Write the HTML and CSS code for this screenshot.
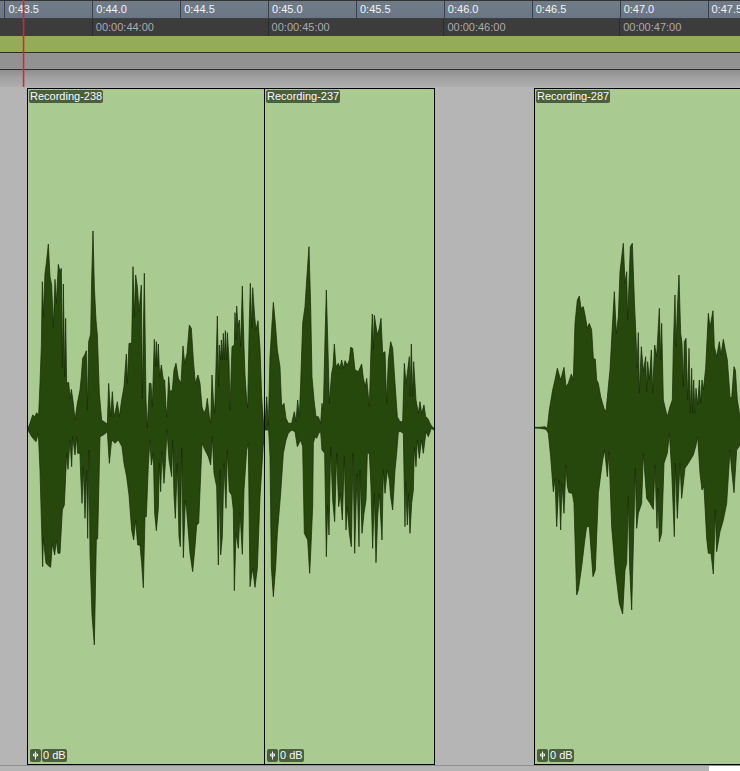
FILE: index.html
```html
<!DOCTYPE html>
<html lang="en">
<head>
<meta charset="utf-8">
<title>Timeline</title>
<link rel="stylesheet" href="styles.css">
</head>
<body>
<div class="editor">
  <div class="ruler">
    <div class="tick first"></div>
    <div class="tick">0:43.5</div>
    <div class="tick">0:44.0</div>
    <div class="tick">0:44.5</div>
    <div class="tick">0:45.0</div>
    <div class="tick">0:45.5</div>
    <div class="tick">0:46.0</div>
    <div class="tick">0:46.5</div>
    <div class="tick">0:47.0</div>
    <div class="tick">0:47.5</div>
  </div>
  <div class="timecode">
    <div class="code lead"></div>
    <div class="code">00:00:44:00</div>
    <div class="code">00:00:45:00</div>
    <div class="code">00:00:46:00</div>
    <div class="code">00:00:47:00</div>
  </div>
  <div class="lane-green"></div>
  <div class="lane-gray"></div>
  <div class="lane-shade"></div>
  <div class="playhead"></div>

  <div class="track">
    <section class="clip clip-a">
      <svg class="wave" viewBox="28 89 236 675" aria-hidden="true">
        <g transform="translate(20 220) scale(.33333)">
          <polygon class="env" points="24,625 30,610 38,585 45,590 50,578 56,585 60,490 64,380 67,185 70,290 75,160 79,130 85,72 90,170 95,195 100,322 105,178 109,250 115,133 120,155 124,145 127,445 130,192 134,470 137,295 140,490 146,487 150,535 154,508 160,550 165,600 172,550 180,510 184,470 188,415 194,405 199,392 202,570 206,365 212,342 215,180 219,33 223,200 228,300 232,345 238,520 245,600 252,605 262,612 266,490 272,590 277,515 282,590 287,570 292,545 298,590 305,540 312,500 319,402 322,490 327,370 335,370 339,140 343,290 347,165 352,200 357,275 364,195 367,535 373,160 378,540 382,625 388,490 393,490 397,560 403,358 406,440 409,365 412,440 415,372 419,470 424,435 430,480 434,480 438,560 441,590 446,470 450,515 457,510 462,450 468,430 475,475 483,490 489,378 494,430 501,400 508,315 514,325 520,420 526,490 534,465 540,490 546,560 552,580 558,565 562,535 568,590 572,610 576,465 580,540 584,580 588,440 592,288 596,500 598,375 602,420 604,360 607,420 610,340 613,420 616,332 620,420 622,338 627,420 630,570 636,380 643,375 645,278 648,360 650,258 654,320 658,300 662,380 667,198 672,380 675,465 680,540 683,565 688,300 691,190 695,325 698,203 704,290 708,330 714,302 720,385 725,530 732,630 738,620 738,680 730,670 720,830 712,1045 705,1102 698,1045 690,1100 685,670 680,690 672,810 667,1003 660,875 655,985 648,940 643,1112 640,870 635,825 628,815 622,690 618,865 612,730 607,950 602,1005 600,750 595,1035 590,800 582,760 577,650 572,735 565,710 555,690 546,670 536,910 530,915 525,980 518,1055 510,1000 500,870 496,840 490,1013 485,685 481,980 477,950 472,730 466,895 462,825 458,660 455,770 447,720 441,630 436,730 432,790 426,695 422,815 418,730 415,865 409,932 404,880 400,700 394,735 390,660 385,735 379,890 375,890 370,1103 365,1030 360,975 353,975 347,900 341,960 335,930 327,825 320,770 312,730 306,680 295,660 285,670 275,660 268,730 262,635 250,645 240,650 233,955 229,960 223,1275 216,1185 210,1000 207,690 203,955 200,750 195,895 190,740 186,850 182,765 180,700 173,700 170,650 165,705 158,650 155,740 150,660 144,748 140,700 133,855 127,870 120,1000 114,1000 109,960 104,1005 97,970 92,1042 86,1038 78,1030 70,955 68,1040 65,930 60,750 55,640 48,665 35,650 24,630"/>
        </g>
      </svg>
      <span class="tag name">Recording-238</span>
      <div class="gain">
        <span class="tag fader"><svg viewBox="0 0 11 11" class="fader-icon"><path d="M5.5 1.5v8M3.5 4h4v2h-4z"/></svg></span>
        <span class="tag level">0 dB</span>
      </div>
    </section>

    <section class="clip clip-b">
      <svg class="wave" viewBox="265 89 169 675" aria-hidden="true">
        <g transform="translate(260 240) scale(.33333)">
          <polygon class="env" points="15,560 20,470 25,560 30,350 40,187 46,250 52,330 60,380 65,500 72,490 78,535 85,550 95,550 103,515 108,545 113,480 118,530 122,430 128,250 135,200 140,120 147,20 152,200 156,410 162,480 168,530 175,530 182,550 186,490 190,510 195,300 199,150 204,330 208,490 215,400 219,380 223,312 228,380 235,370 240,385 245,360 250,385 255,362 262,375 268,360 272,322 278,325 285,390 295,395 305,372 310,415 316,440 320,415 328,500 333,330 337,222 340,330 343,226 352,285 358,265 363,235 368,340 375,335 380,490 385,360 392,305 398,325 405,430 412,530 420,545 428,545 433,370 438,430 442,400 448,350 450,470 454,312 458,470 461,365 468,480 475,520 480,485 485,520 492,495 497,530 503,535 510,550 516,560 522,565 522,570 514,565 505,590 498,575 490,640 484,600 478,655 472,600 468,680 463,620 460,750 455,790 450,880 445,760 442,855 437,725 435,860 430,580 422,575 415,575 410,640 405,690 398,810 392,770 388,720 382,690 375,760 370,690 366,900 358,760 353,830 348,968 343,760 338,925 333,740 328,640 322,640 318,780 312,820 306,880 300,690 297,920 291,700 284,940 279,640 274,920 268,880 262,800 258,870 253,650 247,840 241,760 236,800 230,640 224,845 218,780 212,620 207,885 203,795 199,950 194,640 186,630 182,575 176,580 170,595 165,590 160,610 158,800 152,940 149,1000 143,900 133,880 128,620 122,600 112,620 105,575 95,570 85,580 78,600 70,640 62,760 52,880 47,980 40,1070 34,980 30,650 26,570 20,570 15,570"/>
        </g>
      </svg>
      <span class="tag name">Recording-237</span>
      <div class="gain">
        <span class="tag fader"><svg viewBox="0 0 11 11" class="fader-icon"><path d="M5.5 1.5v8M3.5 4h4v2h-4z"/></svg></span>
        <span class="tag level">0 dB</span>
      </div>
    </section>

    <div class="gap"></div>

    <section class="clip clip-c">
      <svg class="wave" viewBox="535 89 205 675" aria-hidden="true">
        <g transform="translate(530 240) scale(.33333)">
          <polygon class="env" points="15,562 30,562 45,560 52,565 58,510 68,450 75,420 82,385 92,420 102,382 108,440 115,430 124,402 130,420 135,250 142,180 148,168 153,205 160,200 165,225 172,265 178,250 185,270 190,355 196,358 200,420 205,430 212,470 222,505 228,515 235,440 240,390 247,260 253,155 259,280 265,230 270,95 280,10 285,130 290,95 293,240 301,20 307,10 313,180 318,290 321,385 325,278 328,460 334,320 340,395 347,350 350,455 353,365 358,420 364,330 368,460 374,315 380,350 388,205 392,360 395,250 400,480 407,510 412,530 420,500 427,480 430,320 435,165 438,320 442,210 447,105 452,280 456,310 460,440 463,305 468,295 473,480 477,325 481,520 485,385 488,520 491,420 495,520 498,445 503,495 508,420 512,490 516,420 520,450 527,385 535,220 540,262 549,212 553,320 560,350 568,305 573,345 580,298 585,325 592,360 600,470 605,475 612,380 616,390 622,480 630,530 640,540 640,600 630,615 620,630 612,758 605,690 600,630 590,790 580,840 570,875 560,935 556,810 550,1002 543,940 535,940 530,895 522,740 516,750 510,700 503,590 497,620 490,645 475,670 465,685 455,775 450,670 442,835 436,670 433,890 425,690 418,580 412,640 402,670 395,880 388,905 384,745 381,865 375,675 370,808 360,790 350,775 340,640 335,790 325,820 320,865 316,685 305,1110 299,980 295,770 290,970 285,990 278,1122 268,1090 255,980 245,860 237,635 232,710 224,630 218,660 205,760 196,990 189,1010 178,860 170,860 165,895 155,980 145,1050 140,1065 132,790 127,760 117,758 112,740 108,675 102,820 96,730 92,870 87,720 80,860 75,715 70,755 62,650 55,580 48,568 30,565 15,564"/>
        </g>
      </svg>
      <span class="tag name">Recording-287</span>
      <div class="gain">
        <span class="tag fader"><svg viewBox="0 0 11 11" class="fader-icon"><path d="M5.5 1.5v8M3.5 4h4v2h-4z"/></svg></span>
        <span class="tag level">0 dB</span>
      </div>
    </section>
  </div>

  <div class="footer">
    <div class="footer-gray"></div>
    <div class="footer-white"></div>
  </div>
</div>
</body>
</html>
```

FILE: styles.css
```css
* { box-sizing: border-box; }
html, body { margin: 0; padding: 0; }
body {
  width: 740px;
  height: 771px;
  overflow: hidden;
  background: #b5b5b5;
  font-family: "Liberation Sans", Arial, sans-serif;
  font-size: 11px;
}
.editor {
  position: relative;
  width: 740px;
  height: 771px;
  overflow: hidden;
  display: flex;
  flex-direction: column;
}
.ruler {
  display: flex;
  flex: none;
  height: 19px;
  background: linear-gradient(#717c89, #6b7684);
  border-top: 1px solid #333;
  border-bottom: 1px solid #3c4046;
  color: #f4f4f4;
  overflow: hidden;
}
.tick {
  flex: none;
  width: 87.9px;
  padding: 2px 0 0 3px;
  line-height: 13px;
  border-left: 1px solid #3c4046;
  white-space: nowrap;
}
.tick.first { width: 4.4px; padding: 0; border-left: 0; }
.timecode {
  display: flex;
  flex: none;
  height: 17px;
  background: #3c3c3c;
  color: #ababab;
}
.code {
  flex: none;
  width: 175.8px;
  padding: 2px 0 0 3px;
  line-height: 13px;
  border-left: 1px solid #2c2c2c;
  white-space: nowrap;
}
.code.lead { width: 91.8px; border-left: 0; }
.lane-green {
  flex: none;
  height: 17px;
  background: #94ab5a;
  border-bottom: 1px solid #2c2f26;
}
.lane-gray {
  flex: none;
  height: 17px;
  background: #939293;
  border-bottom: 1px solid #2f2f2f;
}
.lane-shade {
  flex: none;
  height: 17px;
  background: linear-gradient(#8e8e8e, #a0a0a0 45%, #aeaeae);
}
.playhead {
  position: absolute;
  z-index: 5;
  left: 23px;
  top: 0;
  width: 1px;
  height: 87px;
  background: #e01f30;
  box-shadow: 1px 0 0 rgba(215, 40, 55, .35), -1px 0 0 rgba(215, 40, 55, .2);
}
.track {
  display: flex;
  flex: none;
  height: 679px;
  padding: 1px 0 1px 27px;
  background: #b5b5b5;
  border-bottom: 1px solid #8e8e8e;
}
.clip {
  position: relative;
  flex: none;
  display: flex;
  flex-direction: column;
  justify-content: space-between;
  align-items: flex-start;
  padding: 1px 1px 2px 1px;
  height: 677px;
  background: #a9cb91;
  border: 1px solid #000;
  border-right: 0;
  color: #fafafa;
}
.clip-a { width: 237px; }
.clip-b { width: 171px; border-right: 1px solid #000; }
.clip-c { flex: 1 1 0; }
.gap { flex: none; width: 99px; }
.wave {
  position: absolute;
  left: 0;
  top: 0;
  width: 100%;
  height: 100%;
}
.env {
  fill: #26480d;
  stroke: #132a07;
  stroke-width: 2.2;
  stroke-linejoin: miter;
  stroke-miterlimit: 10;
}
.tag {
  position: relative;
  display: block;
  background: #4a5f3c;
  border-radius: 2px;
  line-height: 13px;
  height: 13px;
  white-space: nowrap;
}
.name { padding: 0 1px; }
.gain {
  position: relative;
  display: flex;
  gap: 1px;
  margin-left: 1px;
}
.fader {
  flex: none;
  width: 11px;
  padding-top: 1px;
}
.fader-icon {
  display: block;
  width: 11px;
  height: 11px;
}
.fader-icon path {
  fill: none;
  stroke: #f0f0f0;
  stroke-width: 1;
}
.level { flex: none; padding: 0 0 0 1px; width: 25px; }
.footer {
  display: flex;
  flex: 1 1 auto;
}
.footer-gray { flex: 1 1 auto; background: #b5b5b5; }
.footer-white { flex: none; width: 31px; background: #fff; }
```
